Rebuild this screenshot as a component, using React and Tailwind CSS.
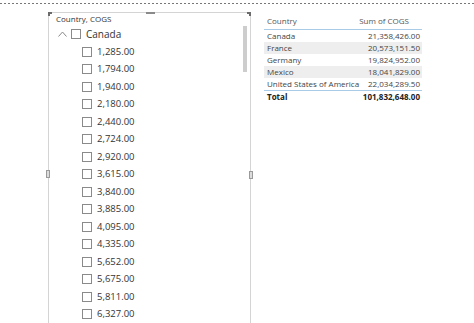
import React from 'react';

const amounts = [
  '1,285.00', '1,794.00', '1,940.00', '2,180.00', '2,440.00', '2,724.00',
  '2,920.00', '3,615.00', '3,840.00', '3,885.00', '4,095.00', '4,335.00',
  '5,652.00', '5,675.00', '5,811.00', '6,327.00',
];

const rows = [
  ['Canada', '21,358,426.00'],
  ['France', '20,573,151.50'],
  ['Germany', '19,824,952.00'],
  ['Mexico', '18,041,829.00'],
  ['United States of America', '22,034,289.50'],
];

function Box() {
  return <span className="block h-[10px] w-[10px] shrink-0 border border-[#8a8a8a] bg-white" />;
}

function Slicer() {
  return (
    <div className="relative ml-[48px] h-[330px] w-[203px] border-x border-t border-[#d4d4d4]">
      {/* corner + side handles */}
      <span className="absolute -left-px -top-px h-[4px] w-[4px] border-l-2 border-t-2 border-[#6b6b6b]" />
      <span className="absolute -right-px -top-px h-[4px] w-[4px] border-r-2 border-t-2 border-[#6b6b6b]" />
      <span className="absolute left-[97px] -top-[1px] h-[2px] w-[9px] bg-[#8a8a8a]" />
      <span className="absolute -left-[3px] top-[157px] h-[8px] w-[4px] border border-[#9a9a9a] bg-[#dcdcdc]" />
      <span className="absolute -right-[3px] top-[158px] h-[8px] w-[4px] border border-[#9a9a9a] bg-[#dcdcdc]" />
      {/* scrollbar */}
      <span className="absolute right-[3px] top-[13px] h-[46px] w-[4px] bg-[#cdcdcd]" />

      <div className="pl-[7px] text-[8px] leading-[12px] text-[#333]">Country, COGS</div>
      <div className="flex h-[18px] items-center pl-[9px] text-[10px] text-[#333]">
        <svg width="9" height="6" viewBox="0 0 9 6" className="mr-[4px]">
          <polyline points="0.5,5.5 4.5,1 8.5,5.5" fill="none" stroke="#8a8a8a" strokeWidth="1" />
        </svg>
        <Box />
        <span className="ml-[5px]">Canada</span>
      </div>
      {amounts.map((a) => (
        <div key={a} className="flex h-[17.5px] items-center pl-[33px] text-[9.5px] text-[#333]">
          <Box />
          <span className="ml-[5px]">{a}</span>
        </div>
      ))}
    </div>
  );
}

function Table() {
  return (
    <div className="ml-[13px] w-[158px] text-[8px] text-[#444]">
      <div className="flex h-[18px] items-center justify-between border-b border-[#a8cbe8] pl-[3px] pr-[13px] text-[#555]">
        <span>Country</span>
        <span>Sum of COGS</span>
      </div>
      {rows.map(([c, v], i) => (
        <div
          key={c}
          className={`flex h-[12px] items-center justify-between pl-[3px] pr-[2px] ${i % 2 ? 'bg-[#eeeeee]' : ''}`}
        >
          <span>{c}</span>
          <span>{v}</span>
        </div>
      ))}
      <div className="flex h-[13px] items-center justify-between border-t border-[#a8cbe8] pl-[3px] pr-[2px] font-bold text-[#222]">
        <span>Total</span>
        <span>101,832,648.00</span>
      </div>
    </div>
  );
}

export default function App() {
  return (
    <div className="h-[323px] w-[474px] overflow-hidden bg-white font-['Open_Sans',sans-serif]">
      <div className="mt-[3px] h-px bg-[repeating-linear-gradient(90deg,#777_0_2px,transparent_2px_4px)]" />
      <div className="mt-[8px] flex items-start">
        <Slicer />
        <Table />
      </div>
    </div>
  );
}
